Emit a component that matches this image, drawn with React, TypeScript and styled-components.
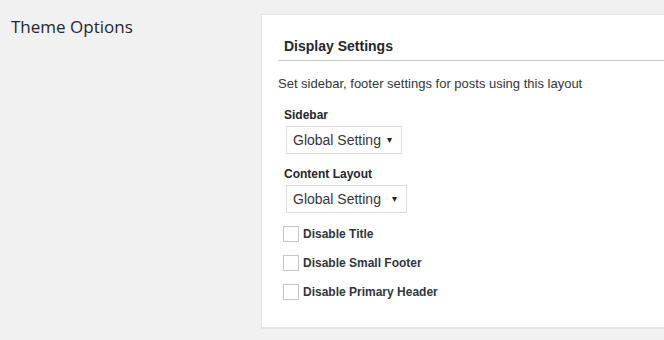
import React from 'react';
import styled, { createGlobalStyle } from 'styled-components';

const GlobalStyle = createGlobalStyle`
  html, body {
    margin: 0;
    padding: 0;
    background-color: #f1f1f1;
    overflow: hidden;
  }
`;

const Page = styled.div`
  display: grid;
  grid-template-columns: 261px 420px;
  width: 664px;
  height: 340px;
  background-color: #f1f1f1;
  overflow: hidden;
`;

const PageTitle = styled.h2`
  margin: 0;
  padding: 15px 0 0 11px;
  font-family: 'Open Sans', 'Noto Sans', sans-serif;
  font-size: 17px;
  font-weight: 400;
  line-height: 24px;
  color: #23282d;
`;

const Panel = styled.div`
  align-self: start;
  margin-top: 14px;
  padding: 0 0 27px 16px;
  background-color: #ffffff;
  border: 1px solid #e5e5e5;
  box-shadow: 0 1px 1px rgba(0, 0, 0, 0.04);
  font-family: 'Liberation Sans', Arial, sans-serif;
  color: #32373c;
`;

const PanelHeading = styled.h3`
  margin: 0;
  padding: 22px 0 5px 6px;
  font-size: 14px;
  font-weight: 700;
  line-height: 18px;
  color: #23282d;
  border-bottom: 1px solid #cccccc;
`;

const Description = styled.p`
  margin: 14px 0 0;
  font-size: 13px;
  line-height: 18px;
  color: #32373c;
`;

const FieldLabel = styled.div<{ $gap: number }>`
  margin: ${(p) => p.$gap}px 0 3px 6px;
  font-size: 12px;
  font-weight: 700;
  line-height: 16px;
  color: #23282d;
`;

const Select = styled.div<{ $width: number }>`
  display: flex;
  align-items: center;
  justify-content: space-between;
  box-sizing: border-box;
  width: ${(p) => p.$width}px;
  height: 28px;
  margin-left: 8px;
  padding: 0 9px 0 6px;
  border: 1px solid #dddddd;
  font-size: 14px;
  line-height: 18px;
  color: #32373c;
  background-color: #ffffff;
`;

const Arrow = styled.span`
  font-size: 10px;
  line-height: 10px;
  color: #222222;
`;

const CheckList = styled.div`
  display: flex;
  flex-direction: column;
  gap: 13px;
  margin: 13px 0 0 5px;
`;

const CheckRow = styled.label`
  display: flex;
  align-items: center;
  gap: 4px;
  font-size: 12px;
  font-weight: 700;
  line-height: 16px;
  color: #32373c;
`;

const CheckBox = styled.input`
  appearance: none;
  box-sizing: border-box;
  width: 16px;
  height: 16px;
  margin: 0;
  border: 1px solid #c4c7ca;
  border-radius: 0;
  background-color: #ffffff;
`;

const selects = [
  { label: 'Sidebar', width: 116, gap: 14 },
  { label: 'Content Layout', width: 121, gap: 12 },
];

const checks = ['Disable Title', 'Disable Small Footer', 'Disable Primary Header'];

const App: React.FC = () => {
  return (
    <>
      <GlobalStyle />
      <Page>
        <PageTitle>Theme Options</PageTitle>
        <Panel>
          <PanelHeading>Display Settings</PanelHeading>
          <Description>Set sidebar, footer settings for posts using this layout</Description>
          {selects.map((s) => (
            <div key={s.label}>
              <FieldLabel $gap={s.gap}>{s.label}</FieldLabel>
              <Select $width={s.width}>
                <span>Global Setting</span>
                <Arrow>▾</Arrow>
              </Select>
            </div>
          ))}
          <CheckList>
            {checks.map((c) => (
              <CheckRow key={c}>
                <CheckBox type="checkbox" />
                {c}
              </CheckRow>
            ))}
          </CheckList>
        </Panel>
      </Page>
    </>
  );
};

export default App;
